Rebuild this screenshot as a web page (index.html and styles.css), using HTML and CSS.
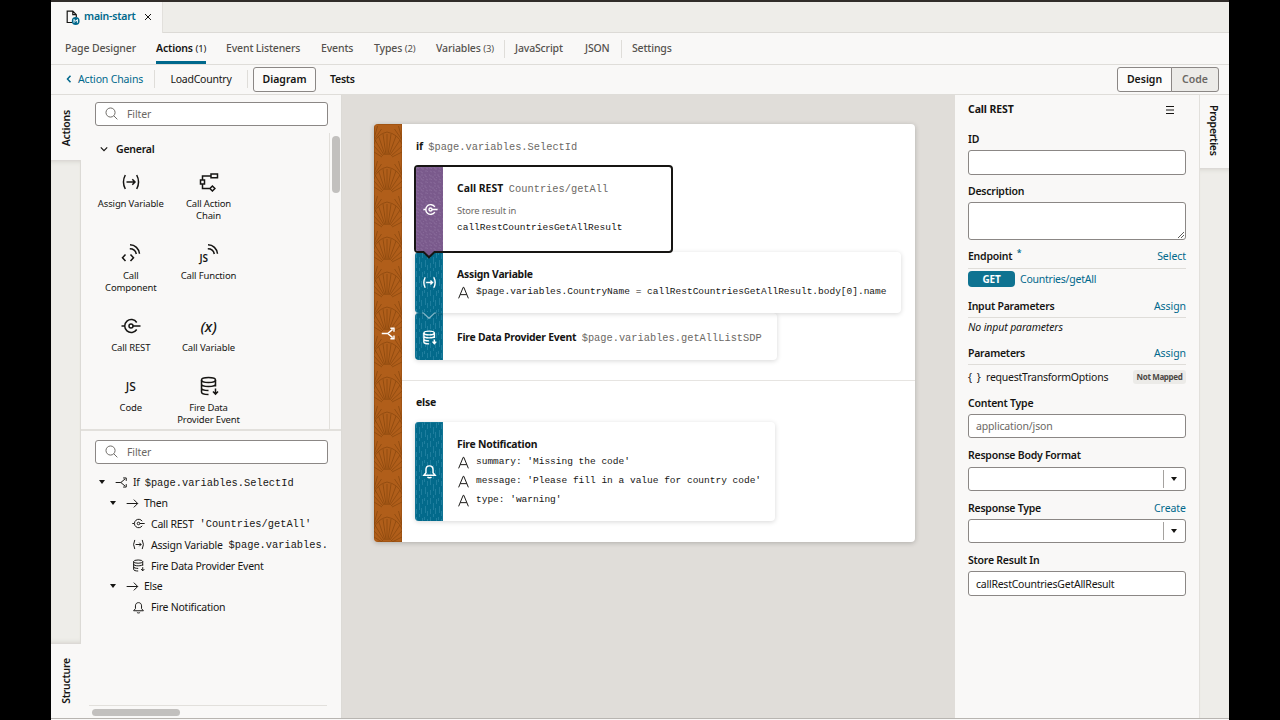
FILE: index.html
```html
<!DOCTYPE html>
<html lang="en">
<head>
  <meta charset="UTF-8">
  <title>main-start - LoadCountry</title>
  <link rel="stylesheet" href="styles.css">
</head>
<body>
  <!-- shared icons -->
  <svg class="defs" width="0" height="0">
    <defs>
      <symbol id="i-assign" viewBox="0 0 20 20"><path d="M4.3 3Q.6 10 4.3 17M15.7 3Q19.400 10 15.700 17M5.500 10h8.500M11.300 7.300 14 10l-2.700 2.700"/></symbol>
      <symbol id="i-chain" viewBox="0 0 20 20"><path d="M12 2h6.500v3.800H12zM1.500 8h4v4h-4zM12 4H3.500v4M3.500 12v4.500h7.500M13.400 14l2.500 2.500-2.500 2.500-2.500-2.500z"/></symbol>
      <symbol id="i-component" viewBox="0 0 20 20"><path d="M4.500 10.500 1.500 13.700 4.500 17M9.500 10.500l3 3.200-3 3.300M9 .8c5 0 9 3.800 9.500 9M8.800 4.800c3.300 0 5.900 2.200 6.500 5.200"/></symbol>
      <symbol id="i-waves" viewBox="0 0 20 20"><path d="M9 .8c5 0 9 3.800 9.500 9M8.800 4.800c3.300 0 5.900 2.200 6.500 5.200"/></symbol>
      <symbol id="i-rest" viewBox="0 0 20 20"><path d="M15.700 6.500a6.500 6.500 0 1 0 0 7M.5 10h3M12 10h7.500"/><circle cx="10" cy="10" r="2"/></symbol>
      <symbol id="i-data" viewBox="0 0 20 20"><ellipse cx="9.500" cy="4" rx="7" ry="2.500"/><path d="M2.500 4v12c0 1.500 3 2.500 7 2.500M16.500 4v6.500M2.500 8c0 1.500 3 2.500 7 2.500s7-1 7-2.500M2.500 12c0 1.500 3 2.500 7 2.500M16.500 12.500v5.500M14 15.500l2.500 2.700 2.500-2.700"/></symbol>
      <symbol id="i-bell" viewBox="0 0 20 20"><path d="M10 2.500c-3 0-4.700 2.200-4.700 5v4.200L2.500 15h15l-2.800-3.300V7.500c0-2.800-1.700-5-4.700-5zM7.500 17.200c.8 1.600 4.200 1.600 5 0"/></symbol>
      <symbol id="i-branch" viewBox="0 0 20 20"><path d="M1 10h8l6.500-5.500M9 10l6.500 5.500M12.500 3h4.800v4.500M12.500 17h4.800v-4.500"/></symbol>
      <symbol id="i-arrow" viewBox="0 0 20 20"><path d="M1 10h17M12 4l6 6-6 6"/></symbol>
      <symbol id="i-text" viewBox="0 0 20 20"><path d="M2.500 19 9.500 2h1l7 17M5 13.300h10"/></symbol>
      <symbol id="i-search" viewBox="0 0 20 20"><circle cx="8.500" cy="8.500" r="7"/><path d="M13.500 13.500 19 19"/></symbol>
    </defs>
  </svg>

  <div class="app">
    <div class="file-tabs">
      <div class="file-tab">
        <svg class="file-icon" viewBox="0 0 14 15"><path class="page" d="M6 12.500H1.200V1.200h5.600l3.500 3.500v2.500M6.800 1.200v3.500h3.500"/><circle cx="9.700" cy="11" r="3.900"/><path class="m" d="M8 12.800V9.400l1.700 2 1.700-2v3.400"/></svg>
        <span>main-start</span>
        <svg class="close" viewBox="0 0 8 8"><path d="M1 1l6 6M7 1 1 7"/></svg>
      </div>
    </div>

    <div class="nav">
      <a class="n1">Page Designer</a>
      <a class="n2 active">Actions <small>(1)</small></a>
      <a class="n3">Event Listeners</a>
      <a class="n4">Events</a>
      <a class="n5">Types <small>(2)</small></a>
      <a class="n6">Variables <small>(3)</small></a>
      <i class="sep"></i>
      <a class="n7">JavaScript</a>
      <a class="n8">JSON</a>
      <i class="sep"></i>
      <a class="n9">Settings</a>
    </div>

    <div class="toolbar">
      <svg class="back" viewBox="0 0 6 8"><path d="M4.500 .8 1.500 4l3 3.200"/></svg>
      <a class="crumb">Action Chains</a>
      <i class="sep"></i>
      <span class="chain-name">LoadCountry</span>
      <i class="sep"></i>
      <button class="btn-diagram">Diagram</button>
      <span class="tests">Tests</span>
      <div class="mode">
        <button>Design</button><button class="off">Code</button>
      </div>
    </div>

    <div class="main">
      <div class="rail left">
        <div class="rail-tab actions"><span>Actions</span></div>
        <div class="rail-gap"></div>
        <div class="rail-tab structure"><span>Structure</span></div>
      </div>

      <div class="side">
        <div class="palette">
          <div class="filter"><svg><use href="#i-search"/></svg>Filter</div>
          <div class="palette-body">
            <div class="palette-list">
              <div class="group"><svg viewBox="0 0 10 6"><path d="M1 1l4 4 4-4"/></svg>General</div>
              <div class="grid">
                <div class="item"><svg><use href="#i-assign"/></svg><p>Assign Variable</p></div>
                <div class="item"><svg><use href="#i-chain"/></svg><p>Call Action<br>Chain</p></div>
                <div class="item"><svg><use href="#i-component"/></svg><p>Call<br>Component</p></div>
                <div class="item"><div class="js-call"><svg><use href="#i-waves"/></svg><b>JS</b></div><p>Call Function</p></div>
                <div class="item"><svg><use href="#i-rest"/></svg><p>Call REST</p></div>
                <div class="item"><div class="glyph var">(x)</div><p>Call Variable</p></div>
                <div class="item"><div class="glyph js">JS</div><p>Code</p></div>
                <div class="item"><svg><use href="#i-data"/></svg><p>Fire Data<br>Provider Event</p></div>
              </div>
            </div>
            <div class="vscroll"><div></div></div>
          </div>
        </div>

        <div class="tree">
          <div class="filter"><svg><use href="#i-search"/></svg>Filter</div>
          <div class="rows">
            <div class="row l0"><i class="caret"></i><svg><use href="#i-branch"/></svg>If <code>$page.variables.SelectId</code></div>
            <div class="row l1"><i class="caret"></i><svg><use href="#i-arrow"/></svg>Then</div>
            <div class="row l2"><svg><use href="#i-rest"/></svg>Call REST <code>'Countries/getAll'</code></div>
            <div class="row l2"><svg><use href="#i-assign"/></svg>Assign Variable <code>$page.variables.</code></div>
            <div class="row l2"><svg><use href="#i-data"/></svg>Fire Data Provider Event</div>
            <div class="row l1"><i class="caret"></i><svg><use href="#i-arrow"/></svg>Else</div>
            <div class="row l2"><svg><use href="#i-bell"/></svg>Fire Notification</div>
          </div>
          <div class="hscroll"><div></div></div>
        </div>
      </div>

      <div class="canvas">
        <div class="if-card">
          <div class="strip orange">
            <svg class="texture">
              <defs>
                <pattern id="fans" width="28" height="35" patternUnits="userSpaceOnUse">
                  <path d="M13 31V10M12 31 9 10M11 31 4.500 12M10 31 1 16M9 32 0 22M14 31l3-21M15 31l7-19M16 31l10-15M17 32l11-10M8 33l-8-5M18 33l10-5"/>
                  <path d="M0 15V1M0 15 3.500 2M0 16 7.500 5M28 15 24.500 2M28 16 20.500 5M0 20Q3 10 13 8Q24 10 28 20"/>
                </pattern>
              </defs>
              <rect width="28" height="418" fill="url(#fans)"/>
            </svg>
            <svg class="icon"><use href="#i-branch"/></svg>
          </div>
          <div class="branches">
            <div class="then">
              <div class="cond"><b>if</b> <code>$page.variables.SelectId</code></div>
              <div class="node rest">
                <div class="strip purple">
                  <svg class="texture">
                    <defs>
                      <pattern id="dots" width="13" height="11" patternUnits="userSpaceOnUse"><path d="M0 1h2l1 1M5 0l1 2h2M10 1l2 1M1 4l2 1M5 4v1l2 1M9 4h2l1 1M0 7l1 2h2M5 8h2M9 7v2l2 1M3 10h2M7 10l1 1"/></pattern>
                    </defs>
                    <rect width="28" height="90" fill="url(#dots)"/>
                  </svg>
                  <svg class="icon"><use href="#i-rest"/></svg>
                </div>
                <div class="body">
                  <h4>Call REST <code>Countries/getAll</code></h4>
                  <p class="hint">Store result in</p>
                  <p class="val">callRestCountriesGetAllResult</p>
                </div>
                <svg class="notch" viewBox="0 0 14 8"><path class="fill" d="M1 0h12v1L7 6 1 1z"/><path d="M0 1h1.500L7 6.300 12.500 1H14"/></svg>
              </div>
              <div class="node assign">
                <div class="strip teal">
                  <svg class="texture">
                    <defs>
                      <pattern id="rain" width="14" height="19" patternUnits="userSpaceOnUse"><path d="M1.500 0v6M4.500 5v7M7.500 1v5M10.500 8v7M1.500 11v5M6.500 10v6M12.500 2v5M9.500 0v3M4.500 16v3M12.500 13v5"/></pattern>
                    </defs>
                    <rect width="28" height="100" fill="url(#rain)"/>
                  </svg>
                  <svg class="icon"><use href="#i-assign"/></svg>
                </div>
                <div class="body">
                  <h4>Assign Variable</h4>
                  <p class="line"><svg><use href="#i-text"/></svg>$page.variables.CountryName = callRestCountriesGetAllResult.body[0].name</p>
                </div>
                <svg class="notch" viewBox="0 0 14 8"><path class="fill" d="M1 0h12v1L7 6 1 1z"/><path d="M0 1h1.500L7 6.300 12.500 1H14"/></svg>
              </div>
              <div class="node fire">
                <div class="strip teal">
                  <svg class="texture"><rect width="28" height="100" fill="url(#rain)"/></svg>
                  <svg class="icon"><use href="#i-data"/></svg>
                </div>
                <div class="body"><h4>Fire Data Provider Event <code>$page.variables.getAllListSDP</code></h4></div>
              </div>
            </div>
            <div class="else">
              <div class="cond"><b>else</b></div>
              <div class="node notify">
                <div class="strip teal">
                  <svg class="texture"><rect width="28" height="100" fill="url(#rain)"/></svg>
                  <svg class="icon"><use href="#i-bell"/></svg>
                </div>
                <div class="body">
                  <h4>Fire Notification</h4>
                  <p class="line"><svg><use href="#i-text"/></svg>summary: 'Missing the code'</p>
                  <p class="line"><svg><use href="#i-text"/></svg>message: 'Please fill in a value for country code'</p>
                  <p class="line"><svg><use href="#i-text"/></svg>type: 'warning'</p>
                </div>
              </div>
            </div>
          </div>
        </div>
      </div>

      <div class="props">
        <div class="title">Call REST
          <svg viewBox="0 0 8 8"><path d="M0 .5h8M0 4h8M0 7.500h8"/></svg>
        </div>
        <div class="label id">ID</div>
        <div class="input h25"></div>
        <div class="label desc">Description</div>
        <div class="input area"><svg viewBox="0 0 8 8"><path d="M1 7l6-6M4 7l3-3"/></svg></div>
        <div class="label ruled endpoint"><span>Endpoint <sup>*</sup></span><a>Select</a></div>
        <div class="method"><b>GET</b><a>Countries/getAll</a></div>
        <div class="label ruled in"><span>Input Parameters</span><a>Assign</a></div>
        <div class="none">No input parameters</div>
        <div class="label ruled par"><span>Parameters</span><a>Assign</a></div>
        <div class="param"><span class="braces">{ }</span>requestTransformOptions<em>Not Mapped</em></div>
        <div class="label ct">Content Type</div>
        <div class="input placeholder">application/json</div>
        <div class="label rbf">Response Body Format</div>
        <div class="input select"><i class="caret"></i></div>
        <div class="label rt"><span>Response Type</span><a>Create</a></div>
        <div class="input select"><i class="caret"></i></div>
        <div class="label rt">Store Result In</div>
        <div class="input h25">callRestCountriesGetAllResult</div>
      </div>

      <div class="rail right">
        <div class="rail-tab properties"><span>Properties</span></div>
        <div class="rail-gap"></div>
      </div>
    </div>
  </div>
</body>
</html>
```
FILE: styles.css
```css
* {
  box-sizing: border-box;
}
body {
  margin: 0;
  height: 720px;
  overflow: hidden;
  background: #000;
  font-family: "Noto Sans", sans-serif;
  font-size: 10.5px;
  letter-spacing: -0.24px;
  color: #161513;
  white-space: nowrap;
}
p, h4 {
  margin: 0;
}
svg {
  display: block;
  flex: none;
  fill: none;
  stroke: currentColor;
  stroke-width: 1.5;
}
.defs {
  position: absolute;
}
code {
  font-family: "Liberation Mono", monospace;
  font-size: 10.35px;
  letter-spacing: 0;
}
a {
  color: #00688c;
}
.app {
  width: 1178px;
  height: 720px;
  margin-left: 51px;
  background: #f9f8f7;
  border-top: 2px solid #312d2a;
  display: flex;
  flex-direction: column;
}

/* header rows */
.file-tabs {
  height: 31px;
  background: #eeede9;
  border-bottom: 1px solid #dcdad6;
  display: flex;
}
.file-tab {
  width: 112px;
  height: 31px;
  background: #f9f8f7;
  border-right: 1px solid #e2e0dc;
  display: flex;
  align-items: center;
  padding: 0 0 3px 15px;
  color: #00688c;
  font-weight: 600;
}
.file-tab span {
  width: 51px;
  letter-spacing: -0.2px;
}
.file-icon {
  width: 14px;
  height: 15px;
  margin: 2px 4px 0 0;
}
.file-icon .page {
  stroke: #161513;
  stroke-width: 1.2;
}
.file-icon circle {
  fill: #00688c;
  stroke: none;
}
.file-icon .m {
  stroke: #fff;
  stroke-width: 1;
}
.close {
  width: 8px;
  height: 8px;
  margin: 2px 0 0 9px;
  stroke-width: 1;
  color: #161513;
}
.nav {
  height: 32px;
  border-bottom: 1px solid #dfddd9;
  display: flex;
  align-items: center;
  padding-left: 14px;
  letter-spacing: -0.15px;
}
.nav a {
  height: 31px;
  line-height: 30px;
  margin-right: 20px;
  color: #55524e;
  font-weight: 500;
}
.nav small {
  font-size: 9.5px;
  font-weight: 400;
}
.nav a.active {
  color: #161513;
  font-weight: 600;
  border-bottom: 3px solid #00688c;
}
.nav .n1 {
  width: 71px;
}
.nav .n2,
.nav .n7 {
  width: 50px;
}
.nav .n3 {
  width: 75px;
}
.nav .n4 {
  width: 33px;
}
.nav .n5 {
  width: 42px;
}
.nav .n6 {
  width: 58px;
}
.nav .n8 {
  width: 26px;
}
.nav a.n6,
.nav a.n8 {
  margin-right: 10px;
}
.sep {
  width: 1px;
  height: 18px;
  background: #dfddd9;
}
.nav .sep {
  margin-right: 10px;
}
.toolbar {
  height: 30px;
  border-bottom: 1px solid #dfddd9;
  display: flex;
  align-items: center;
  padding: 0 10px 1px 15px;
}
.back {
  width: 6px;
  height: 8px;
  margin-right: 6px;
  color: #00688c;
}
.crumb {
  width: 76px;
  letter-spacing: -0.15px;
}
.chain-name {
  width: 92px;
  text-align: center;
}
button {
  font: inherit;
  color: inherit;
  font-weight: 600;
  height: 25px;
  padding: 0 0 1px;
  background: #fcfbfa;
  border: 1px solid #8b8785;
  border-radius: 3px;
}
.btn-diagram {
  width: 63px;
  margin: 0 14px 0 5px;
}
.tests {
  font-weight: 600;
}
.mode {
  margin-left: auto;
  display: flex;
}
.mode button {
  width: 55px;
  border-radius: 3px 0 0 3px;
}
.mode .off {
  width: 48px;
  margin-left: -1px;
  border-radius: 0 3px 3px 0;
  background: #ecebe8;
  color: #6b6864;
}

.main {
  height: 624px;
  border-bottom: 1px solid #b8b5b1;
  display: flex;
}

/* side rails */
.rail {
  display: flex;
  flex-direction: column;
}
.rail.left {
  width: 30px;
}
.rail.right {
  width: 29px;
}
.rail-tab {
  display: flex;
  align-items: center;
  justify-content: center;
  font-weight: 600;
}
.rail-tab span {
  writing-mode: vertical-rl;
}
.left .rail-tab {
  padding-right: 1px;
}
.left .rail-tab span {
  transform: rotate(180deg);
}
.rail-gap {
  flex: 1;
  background: #eeede9;
  box-shadow: inset 0 5px 5px -4px #cfccc7, inset 0 -5px 5px -4px #cfccc7;
}
.left .rail-gap {
  border-right: 1px solid #dcdad6;
}
.right .rail-gap {
  box-shadow: inset 0 5px 5px -4px #cfccc7;
}
.actions {
  height: 65px;
  padding-top: 2px;
}
.structure {
  height: 74px;
}
.properties {
  height: 73px;
  padding: 0 1px 2px 0;
}

/* left panel */
.side {
  width: 261px;
  display: flex;
  flex-direction: column;
  border-right: 1px solid #dcdad6;
}
.filter {
  width: 233px;
  height: 24px;
  margin-left: 14px;
  padding-bottom: 1px;
  border: 1px solid #8b8785;
  border-radius: 3px;
  background: #fff;
  color: #6b6864;
  display: flex;
  align-items: center;
  letter-spacing: -0.1px;
}
.filter svg {
  width: 13px;
  height: 13px;
  margin: 0 9px 0 9px;
}
.palette {
  height: 336px;
  padding-top: 7px;
  border-bottom: 2px solid #e2e0dc;
  overflow: hidden;
}
.palette-body {
  height: 297px;
  margin-top: 7px;
  display: flex;
}
.palette-list {
  width: 249px;
  border-right: 1px solid #e2e0dc;
  overflow: hidden;
}
.group {
  height: 32px;
  display: flex;
  align-items: center;
  padding-left: 19px;
  font-weight: 600;
}
.group svg {
  width: 8px;
  height: 6px;
  margin-right: 8px;
}
.grid {
  display: grid;
  grid-template-columns: 77.5px 78px;
  row-gap: 20px;
  padding: 6px 0 0 11px;
}
.item {
  text-align: center;
  font-size: 9.5px;
  line-height: 12px;
  letter-spacing: -0.15px;
}
.item > svg,
.js-call {
  width: 20px;
  height: 20px;
  margin: 1px auto 6px;
}
.js-call svg {
  width: 20px;
  height: 20px;
}
.js-call b {
  display: block;
  margin: -12px 0 0 1px;
  text-align: left;
  font-size: 10px;
  font-weight: 600;
}
.item p {
  padding-bottom: 1px;
}
.glyph {
  height: 24px;
  line-height: 24px;
  margin-bottom: 3px;
  font-size: 12px;
  font-weight: 500;
}
.glyph.var {
  font-style: italic;
  font-size: 15px;
  line-height: 22px;
}
.vscroll {
  width: 11px;
  padding: 3px 0 0 2px;
}
.vscroll div {
  width: 8px;
  height: 57px;
  border-radius: 4px;
  background: #c2c0be;
}
.tree {
  flex: 1;
  padding-top: 9px;
  display: flex;
  flex-direction: column;
}
.rows {
  flex: 1;
  padding-top: 8px;
}
.row {
  height: 20.8px;
  display: flex;
  align-items: center;
}
.row svg {
  width: 13px;
  height: 13px;
  margin-right: 6px;
}
.row code {
  margin-left: 6px;
  padding-top: 1px;
}
.caret {
  border: 3.5px solid transparent;
  border-top: 4px solid #161513;
  border-bottom: 0;
}
.row .caret {
  margin-right: 10px;
}
.l0 {
  padding-left: 18px;
}
.row.l0 svg {
  margin-right: 5px;
}
.l0 code {
  margin-left: 5px;
}
.l1 {
  padding-left: 29px;
}
.row.l1 svg {
  margin-right: 5px;
}
.l2 {
  padding-left: 51px;
}
.hscroll {
  width: 238px;
  height: 13px;
  margin-left: 8px;
  border-top: 1px solid #e2e0dc;
  padding: 3px 0 0 3px;
}
.hscroll div {
  width: 88px;
  height: 7px;
  border-radius: 4px;
  background: #c2c0be;
}

/* diagram */
.canvas {
  width: 613px;
  background: #e0ddd9;
  padding: 29px 0 0 32px;
}
.if-card {
  width: 541px;
  height: 418px;
  display: flex;
  background: #fff;
  border-radius: 4px;
  box-shadow: 0 1px 5px rgba(0, 0, 0, 0.22);
}
.strip {
  width: 28px;
  flex: none;
  display: grid;
  place-items: center;
  border-radius: 4px 0 0 4px;
  overflow: hidden;
  color: #fff;
}
.strip > svg {
  grid-area: 1 / 1;
}
.texture {
  width: 28px;
  height: 100%;
  stroke-width: 0.7;
}
.orange {
  background: #b05e1a;
}
.orange .texture {
  color: #8c480c;
  stroke-width: 0.8;
}
.purple {
  background: #7a5a8c;
}
.purple .texture {
  color: #8d6f9d;
}
.teal {
  background: #036a8b;
}
.teal .texture {
  color: #2b87a6;
}
.icon {
  width: 15px;
  height: 15px;
  stroke-width: 1.9;
}
.branches {
  flex: 1;
}
.then {
  height: 257px;
  border-bottom: 1px solid #e6e4e1;
}
.then,
.else {
  padding-left: 13px;
}
.cond {
  height: 41px;
  padding-left: 1px;
  line-height: 44px;
}
.else .cond {
  line-height: 43px;
}
.cond b,
h4 {
  font-weight: 700;
}
.cond code,
h4 code {
  color: #6b6864;
  font-weight: 400;
  margin-left: 3px;
}
.node {
  position: relative;
  display: flex;
  background: #fff;
  border-radius: 4px;
  box-shadow: 0 1px 5px rgba(0, 0, 0, 0.16);
}
.node .body {
  padding-left: 14px;
}
h4 {
  font-size: 10.4px;
  line-height: 16px;
}
.rest {
  z-index: 2;
  width: 259px;
  height: 88px;
  margin-left: -1px;
  border: 2px solid #161513;
  box-shadow: none;
}
.rest .strip {
  width: 27px;
  border-radius: 2px 0 0 2px;
}
.rest .body {
  padding-top: 13px;
}
.rest h4 {
  letter-spacing: 0;
}
.hint {
  color: #6b6864;
  font-size: 9.4px;
  letter-spacing: -0.15px;
  line-height: 16px;
  margin-top: 6px;
}
.val,
.line {
  font-family: "Liberation Mono", monospace;
  font-size: 9.5px;
  letter-spacing: 0;
}
.val {
  line-height: 18px;
}
.assign {
  z-index: 1;
  width: 486px;
  height: 61px;
  margin-top: -1px;
}
.assign .body {
  padding-top: 14px;
}
.line {
  height: 19px;
  display: flex;
  align-items: center;
}
.line svg {
  width: 13px;
  height: 13px;
  margin: 2px 6px 0 0;
}
.fire {
  width: 362px;
  height: 47px;
}
.fire .icon {
  margin-top: 1px;
}
.fire .body {
  padding-top: 16px;
}
.notify {
  width: 360px;
  height: 99px;
}
.notify .body {
  padding-top: 14px;
}
.notch {
  position: absolute;
  left: 7px;
  bottom: -7px;
  width: 14px;
  height: 8px;
  color: #7fb4c6;
  stroke-width: 1.2;
}
.notch .fill {
  fill: #036a8b;
  stroke: none;
}
.rest .notch {
  left: 6px;
  bottom: -8px;
  color: #161513;
  stroke-width: 2;
}
.rest .notch .fill {
  fill: #77568a;
}

/* properties */
.props {
  width: 245px;
  padding: 0 13px;
  border-right: 1px solid #e2e0dc;
}
.title {
  height: 29px;
  display: flex;
  align-items: center;
  justify-content: space-between;
  padding: 0 12px 1px 0;
  font-weight: 700;
  letter-spacing: -0.1px;
}
.title svg {
  width: 8px;
  height: 8px;
  margin-top: 2px;
  stroke-width: 1;
}
.label {
  height: 22px;
  display: flex;
  align-items: center;
  justify-content: space-between;
  font-weight: 600;
}
.label a {
  font-weight: 400;
  letter-spacing: -0.05px;
}
.id {
  margin-top: 4px;
}
.desc {
  margin-top: 5px;
}
.ruled {
  padding-bottom: 1px;
  border-bottom: 1px solid #dfddd9;
}
.endpoint {
  height: 24px;
  margin-top: 5px;
}
.endpoint sup {
  margin-left: 2px;
  color: #00688c;
  line-height: 0;
}
.in {
  margin-top: 6px;
}
.par {
  margin-top: 5px;
}
.method {
  height: 21px;
  display: flex;
  align-items: center;
  padding-bottom: 1px;
}
.method b {
  width: 47px;
  height: 16px;
  line-height: 16px;
  margin-right: 5px;
  border-radius: 4px;
  background: #0f7391;
  color: #fff;
  text-align: center;
  font-size: 10px;
}
.none {
  height: 20px;
  line-height: 19px;
  font-style: italic;
  letter-spacing: -0.12px;
}
.param {
  height: 24px;
  display: flex;
  align-items: center;
  padding-bottom: 1px;
}
.braces {
  width: 18px;
  letter-spacing: 1px;
}
.param em {
  margin-left: auto;
  width: 53px;
  height: 14px;
  line-height: 14px;
  border-radius: 3px;
  background: #ecebe8;
  color: #4d4945;
  text-align: center;
  font-size: 8px;
  font-style: normal;
  font-weight: 700;
  letter-spacing: -0.35px;
}
.ct {
  margin-top: 3px;
}
.rbf {
  margin-top: 7px;
  padding-bottom: 2px;
}
.rt {
  margin-top: 6px;
}
.input {
  height: 24px;
  border: 1px solid #8b8785;
  border-radius: 3px;
  background: #fff;
  display: flex;
  align-items: center;
  padding-left: 7px;
}
.input.h25 {
  height: 25px;
}
.input.area {
  height: 38px;
  align-items: flex-end;
  justify-content: flex-end;
}
.area svg {
  width: 8px;
  height: 8px;
  stroke-width: 0.7;
}
.placeholder {
  color: #6b6864;
  letter-spacing: -0.15px;
}
.select {
  justify-content: flex-end;
}
.select .caret {
  margin-right: 8px;
}
.select::before {
  content: "";
  width: 1px;
  height: 18px;
  margin-right: 7px;
  background: #a5a29f;
}
```
